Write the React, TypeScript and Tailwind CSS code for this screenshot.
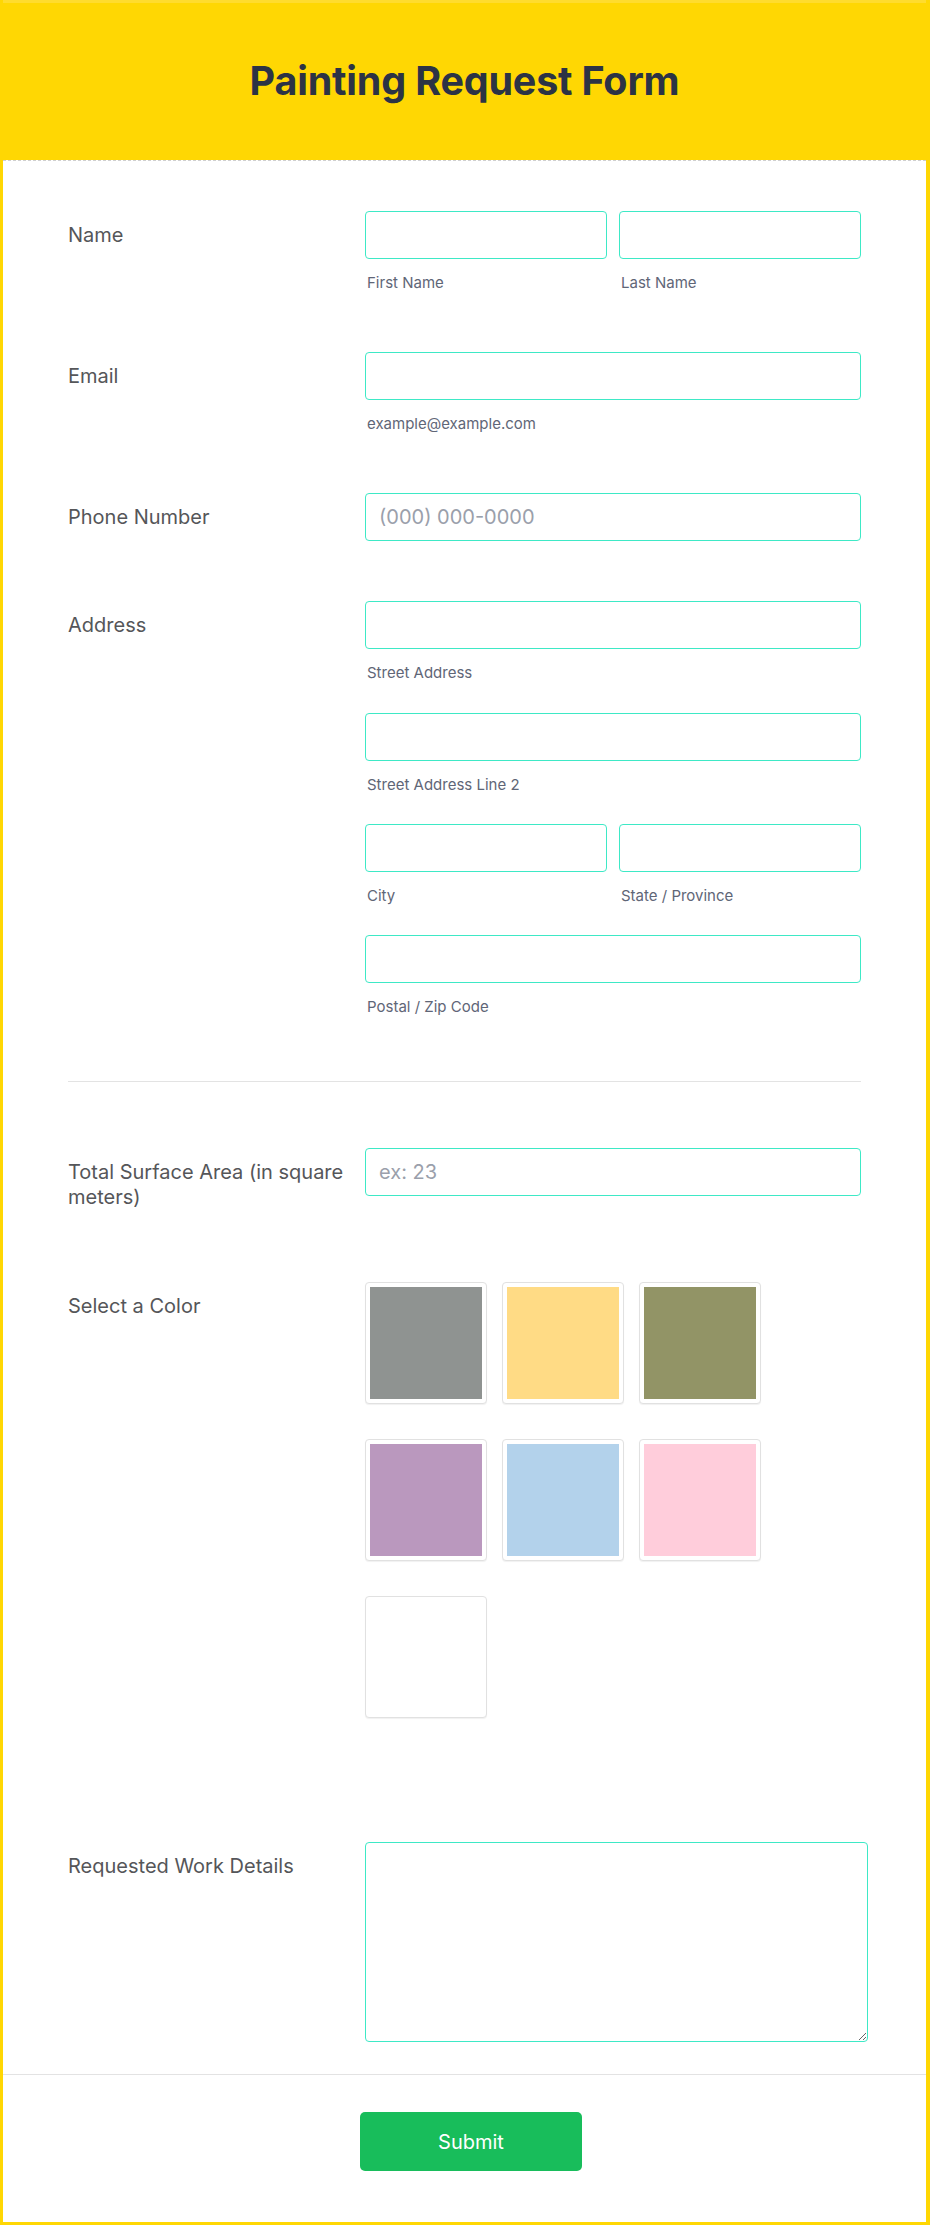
import type { ReactNode } from "react";

const inputCls =
  "block w-full h-[48px] rounded-[4px] border border-[#3ee9c6] bg-white px-[13px] text-[20px] text-[#2c3345] placeholder:text-[#9aa0ab] outline-none";

function Sub({ children }: { children: ReactNode }) {
  return <div className="mt-[14px] h-[20px] leading-[20px] text-[15px] text-[#5f6677] pl-[2px]">{children}</div>;
}

function Row({ label, children, className = "" }: { label: string; children: ReactNode; className?: string }) {
  return (
    <div className={`flex ${className}`}>
      <div className="w-[297px] shrink-0 pt-[12px] pr-[16px] text-[20px] leading-[25px] text-[#555659]">{label}</div>
      <div className="flex-1 min-w-0">{children}</div>
    </div>
  );
}

const swatches = ["#8f9391", "#ffdb85", "#929466", "#ba98be", "#b3d2eb", "#ffcddb", ""];

export default function App() {
  return (
    <div className="w-[930px] min-h-[2225px] bg-white border-l-[3px] border-r-[4px] border-b-[3px] border-[#ffd703] font-['Inter','Noto_Sans',sans-serif] flex flex-col">
      {/* Header */}
      <header className="h-[160px] shrink-0 bg-[#ffd703] border-t-[3px] border-[#ffdc2e] flex items-center justify-center">
        <h1 className="text-[39.5px] font-bold text-[#2c3345] tracking-[-0.2px]">Painting Request Form</h1>
      </header>
      <div className="h-px shrink-0 border-t border-dashed border-[#cfcfcf]" />

      {/* Fields */}
      <main className="px-[65px] pt-[50px] pb-[31px] flex-1">
        <Row label="Name">
          <div className="flex gap-[12px]">
            <div className="flex-1">
              <input className={inputCls} />
              <Sub>First Name</Sub>
            </div>
            <div className="flex-1">
              <input className={inputCls} />
              <Sub>Last Name</Sub>
            </div>
          </div>
        </Row>

        <Row label="Email" className="mt-[59px]">
          <input className={inputCls} />
          <Sub>example@example.com</Sub>
        </Row>

        <Row label="Phone Number" className="mt-[59px]">
          <input className={inputCls} placeholder="(000) 000-0000" />
        </Row>

        <Row label="Address" className="mt-[60px]">
          <input className={inputCls} />
          <Sub>Street Address</Sub>
          <div className="mt-[30px]">
            <input className={inputCls} />
            <Sub>Street Address Line 2</Sub>
          </div>
          <div className="mt-[29px] flex gap-[12px]">
            <div className="flex-1">
              <input className={inputCls} />
              <Sub>City</Sub>
            </div>
            <div className="flex-1">
              <input className={inputCls} />
              <Sub>State / Province</Sub>
            </div>
          </div>
          <div className="mt-[29px]">
            <input className={inputCls} />
            <Sub>Postal / Zip Code</Sub>
          </div>
        </Row>

        <div className="mt-[64px] h-px bg-[#e3e3e3]" />

        <Row label="Total Surface Area (in square meters)" className="mt-[66px]">
          <input className={inputCls} placeholder="ex: 23" />
        </Row>

        <Row label="Select a Color" className="mt-[72px]">
          <div className="grid grid-cols-[122px_122px_122px] gap-x-[15px] gap-y-[35px]">
            {swatches.map((c, i) => (
              <div
                key={i}
                className="h-[122px] w-[122px] rounded-[4px] border border-[#e1e1e1] bg-white p-[4px] shadow-[0_1px_1px_rgba(0,0,0,0.06)]"
              >
                {c && <div className="h-full w-full" style={{ backgroundColor: c }} />}
              </div>
            ))}
          </div>
        </Row>

        <Row label="Requested Work Details" className="mt-[124px]">
          <textarea className="block w-[503px] h-[200px] rounded-[4px] border border-[#3ee9c6] bg-white p-[12px] text-[20px] outline-none" />
        </Row>
      </main>

      {/* Footer */}
      <footer className="border-t border-[#e3e3e3] pt-[37px] pb-[51px] pl-[357px]">
        <button className="w-[222px] h-[59px] rounded-[5px] bg-[#18bd5b] text-white text-[20px]">Submit</button>
      </footer>
    </div>
  );
}
